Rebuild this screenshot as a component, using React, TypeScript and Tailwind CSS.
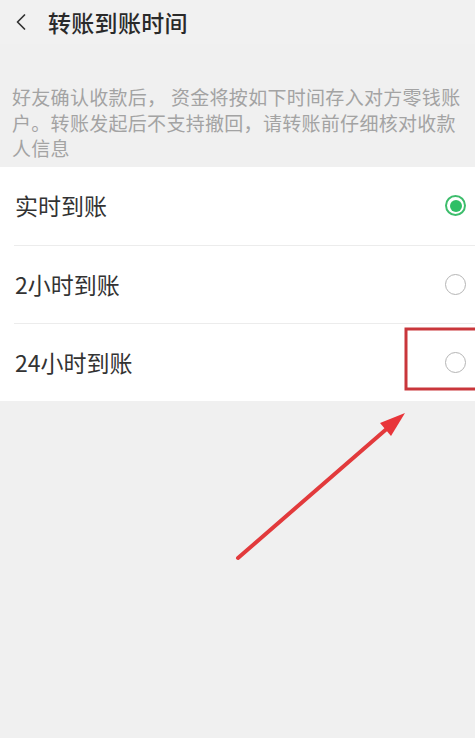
import { ChevronLeft } from "lucide-react"

const options = [
  { label: "实时到账", checked: true },
  { label: "2小时到账", checked: false },
  { label: "24小时到账", checked: false },
]

function Radio({ checked }: { checked: boolean }) {
  if (checked) {
    return (
      <span className="flex h-[21px] w-[21px] items-center justify-center rounded-full border-2 border-[#3dbd6c]">
        <span className="h-[12px] w-[12px] rounded-full bg-[#2fbf66]" />
      </span>
    )
  }
  return <span className="block h-[21px] w-[21px] rounded-full border-[1.5px] border-[#b5b5b5]" />
}

export default function App() {
  return (
    <div
      className="relative h-[738px] w-[475px] overflow-hidden bg-[#f0f0f0]"
      style={{ fontFamily: '"Noto Sans CJK SC", "Noto Sans", sans-serif' }}
    >
      {/* Top Bar */}
      <header className="flex h-[44px] items-center bg-[#f1f1f1] pl-[7px]">
        <ChevronLeft className="h-[28px] w-[28px] text-[#333]" strokeWidth={1.5} />
        <h1 className="ml-[13px] text-[23px] font-medium leading-none tracking-[0.3px] text-[#2a2a2a]">转账到账时间</h1>
      </header>

      <p className="px-[12px] pb-[6px] pt-[40px] text-[19px] leading-[25.5px] tracking-[0.3px] text-[#a3a3a3]">
        好友确认收款后， 资金将按如下时间存入对方零钱账户。转账发起后不支持撤回，请转账前仔细核对收款人信息
      </p>

      {/* Options */}
      <div className="bg-white">
        {options.map((item, i) => (
          <div key={item.label} className={i > 0 ? "ml-[14px] border-t border-[#ececec]" : "ml-[14px]"}>
            <div className={i > 0 ? "flex h-[77px] items-center justify-between pr-[9px]" : "flex h-[78px] items-center justify-between pr-[9px]"}>
              <span className="pl-[1px] text-[23px] text-[#333]">{item.label}</span>
              <Radio checked={item.checked} />
            </div>
          </div>
        ))}
      </div>

      {/* Annotation overlay */}
      <svg className="pointer-events-none absolute left-0 top-0" width="475" height="738" viewBox="0 0 475 738">
        <rect x="406" y="329" width="90" height="60" fill="none" stroke="#c9363b" strokeWidth="3" />
        <line x1="238" y1="558" x2="390" y2="426" stroke="#e23a3c" strokeWidth="4" strokeLinecap="round" />
        <polygon points="405,413 391,436 380,423" fill="#e8353a" />
      </svg>
    </div>
  )
}
